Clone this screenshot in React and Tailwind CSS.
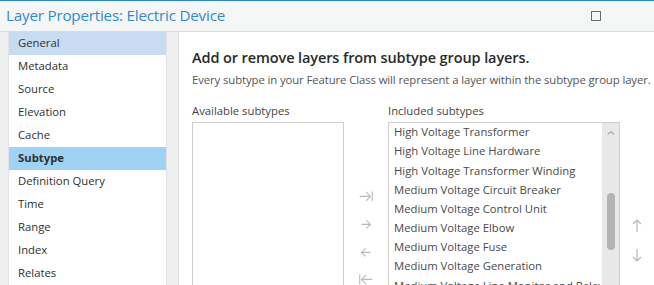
import React from 'react';

const navItems = [
  'General',
  'Metadata',
  'Source',
  'Elevation',
  'Cache',
  'Subtype',
  'Definition Query',
  'Time',
  'Range',
  'Index',
  'Relates',
];

const included = [
  'High Voltage Transformer',
  'High Voltage Line Hardware',
  'High Voltage Transformer Winding',
  'Medium Voltage Circuit Breaker',
  'Medium Voltage Control Unit',
  'Medium Voltage Elbow',
  'Medium Voltage Fuse',
  'Medium Voltage Generation',
  'Medium Voltage Line Monitor and Relay',
];

// flechas grises entre las dos listas
function ArrowIcon({ kind }) {
  return (
    <svg width="16" height="12" viewBox="0 0 16 12" fill="none" stroke="#b9b9b9" strokeWidth="1.2">
      {kind === 'addAll' && (
        <>
          <path d="M1 6h12M8 1l5 5-5 5" />
          <path d="M15 0.5v11" />
        </>
      )}
      {kind === 'add' && <path d="M3 6h10M8.5 1.5L13 6l-4.5 4.5" />}
      {kind === 'remove' && <path d="M13 6H3M7.5 1.5L3 6l4.5 4.5" />}
      {kind === 'removeAll' && (
        <>
          <path d="M15 6H3M8 1L3 6l5 5" />
          <path d="M1 0.5v11" />
        </>
      )}
    </svg>
  );
}

function VArrow({ up }) {
  return (
    <svg width="10" height="14" viewBox="0 0 10 14" fill="none" stroke="#b9b9b9" strokeWidth="1.2">
      {up ? <path d="M5 13V1M1 5l4-4 4 4" /> : <path d="M5 1v12M1 9l4 4 4-4" />}
    </svg>
  );
}

export default function App() {
  return (
    <div
      className="w-[654px] h-[285px] overflow-hidden bg-[#eeeff0] flex flex-col border-t border-[#2a8bd8]"
      style={{ fontFamily: '"Open Sans", "Noto Sans", sans-serif' }}
    >
      {/* Barra de título */}
      <div className="h-[31px] shrink-0 bg-[#f5f6f6] border-b border-[#d9dadb] flex items-center justify-between pl-[6px] pr-[53px]">
        <span className="text-[15.2px] text-[#2f8ad3] leading-none tracking-[-0.2px]">Layer Properties: Electric Device</span>
        <span className="w-[10px] h-[10px] border border-[#6b6b6b]" />
      </div>

      <div className="flex flex-1 min-h-0 pl-[8px]">
        {/* Navegación */}
        <div className="w-[159px] bg-white border-x border-[#e1e2e3] flex flex-col">
          {navItems.map((item) => (
            <div
              key={item}
              className={`h-[23px] shrink-0 flex items-center pl-[9px] text-[11.3px] text-[#303030] ${
                item === 'General' ? 'bg-[#c7dcf0]' : item === 'Subtype' ? 'bg-[#9fd3f3] font-bold' : ''
              }`}
            >
              {item}
            </div>
          ))}
        </div>

        {/* Contenido */}
        <div className="flex-1 ml-[11px] bg-white border-l border-[#dcdddd] pl-[13px] pt-[17px] flex flex-col min-w-0">
          <div className="text-[14.5px] font-semibold text-[#2a2a2a] leading-[18px] whitespace-nowrap tracking-[-0.1px]">
            Add or remove layers from subtype group layers.
          </div>
          <div className="mt-[5px] text-[11.35px] text-[#555] leading-[16px] whitespace-nowrap tracking-[-0.1px]">
            Every subtype in your Feature Class will represent a layer within the subtype group layer.
          </div>

          <div className="flex mt-[15px] flex-1 min-h-0">
            <div className="w-[152px] flex flex-col">
              <div className="text-[11.3px] text-[#444] leading-[16px] whitespace-nowrap">Available subtypes</div>
              <div className="mt-[3px] flex-1 border border-[#cfcfcf] border-b-0" />
            </div>

            <div className="w-[44px] flex flex-col items-center pt-[88px] gap-[17px]">
              <ArrowIcon kind="addAll" />
              <ArrowIcon kind="add" />
              <ArrowIcon kind="remove" />
              <ArrowIcon kind="removeAll" />
            </div>

            <div className="w-[232px] flex flex-col">
              <div className="text-[11.3px] text-[#444] leading-[16px] whitespace-nowrap">Included subtypes</div>
              <div className="mt-[3px] flex-1 border border-[#cfcfcf] border-b-0 flex min-h-0 overflow-hidden">
                <div className="flex-1 pl-[5px] min-w-0">
                  {included.map((s) => (
                    <div key={s} className="h-[19.2px] flex items-center text-[11.3px] text-[#4a4a4a] whitespace-nowrap">
                      {s}
                    </div>
                  ))}
                </div>
                <div className="w-[17px] shrink-0 bg-[#e8e8e8] flex flex-col items-center">
                  <svg className="mt-[7px]" width="8" height="5" viewBox="0 0 8 5" fill="none" stroke="#777" strokeWidth="1">
                    <path d="M1 4.5L4 1.5l3 3" />
                  </svg>
                  <div className="mt-[58px] w-[8px] h-[57px] shrink-0 rounded-full bg-[#b4b4b4]" />
                </div>
              </div>
            </div>

            <div className="flex-1 flex flex-col items-center pt-[116px] gap-[15px]">
              <VArrow up />
              <VArrow />
            </div>
          </div>
        </div>
      </div>
    </div>
  );
}
